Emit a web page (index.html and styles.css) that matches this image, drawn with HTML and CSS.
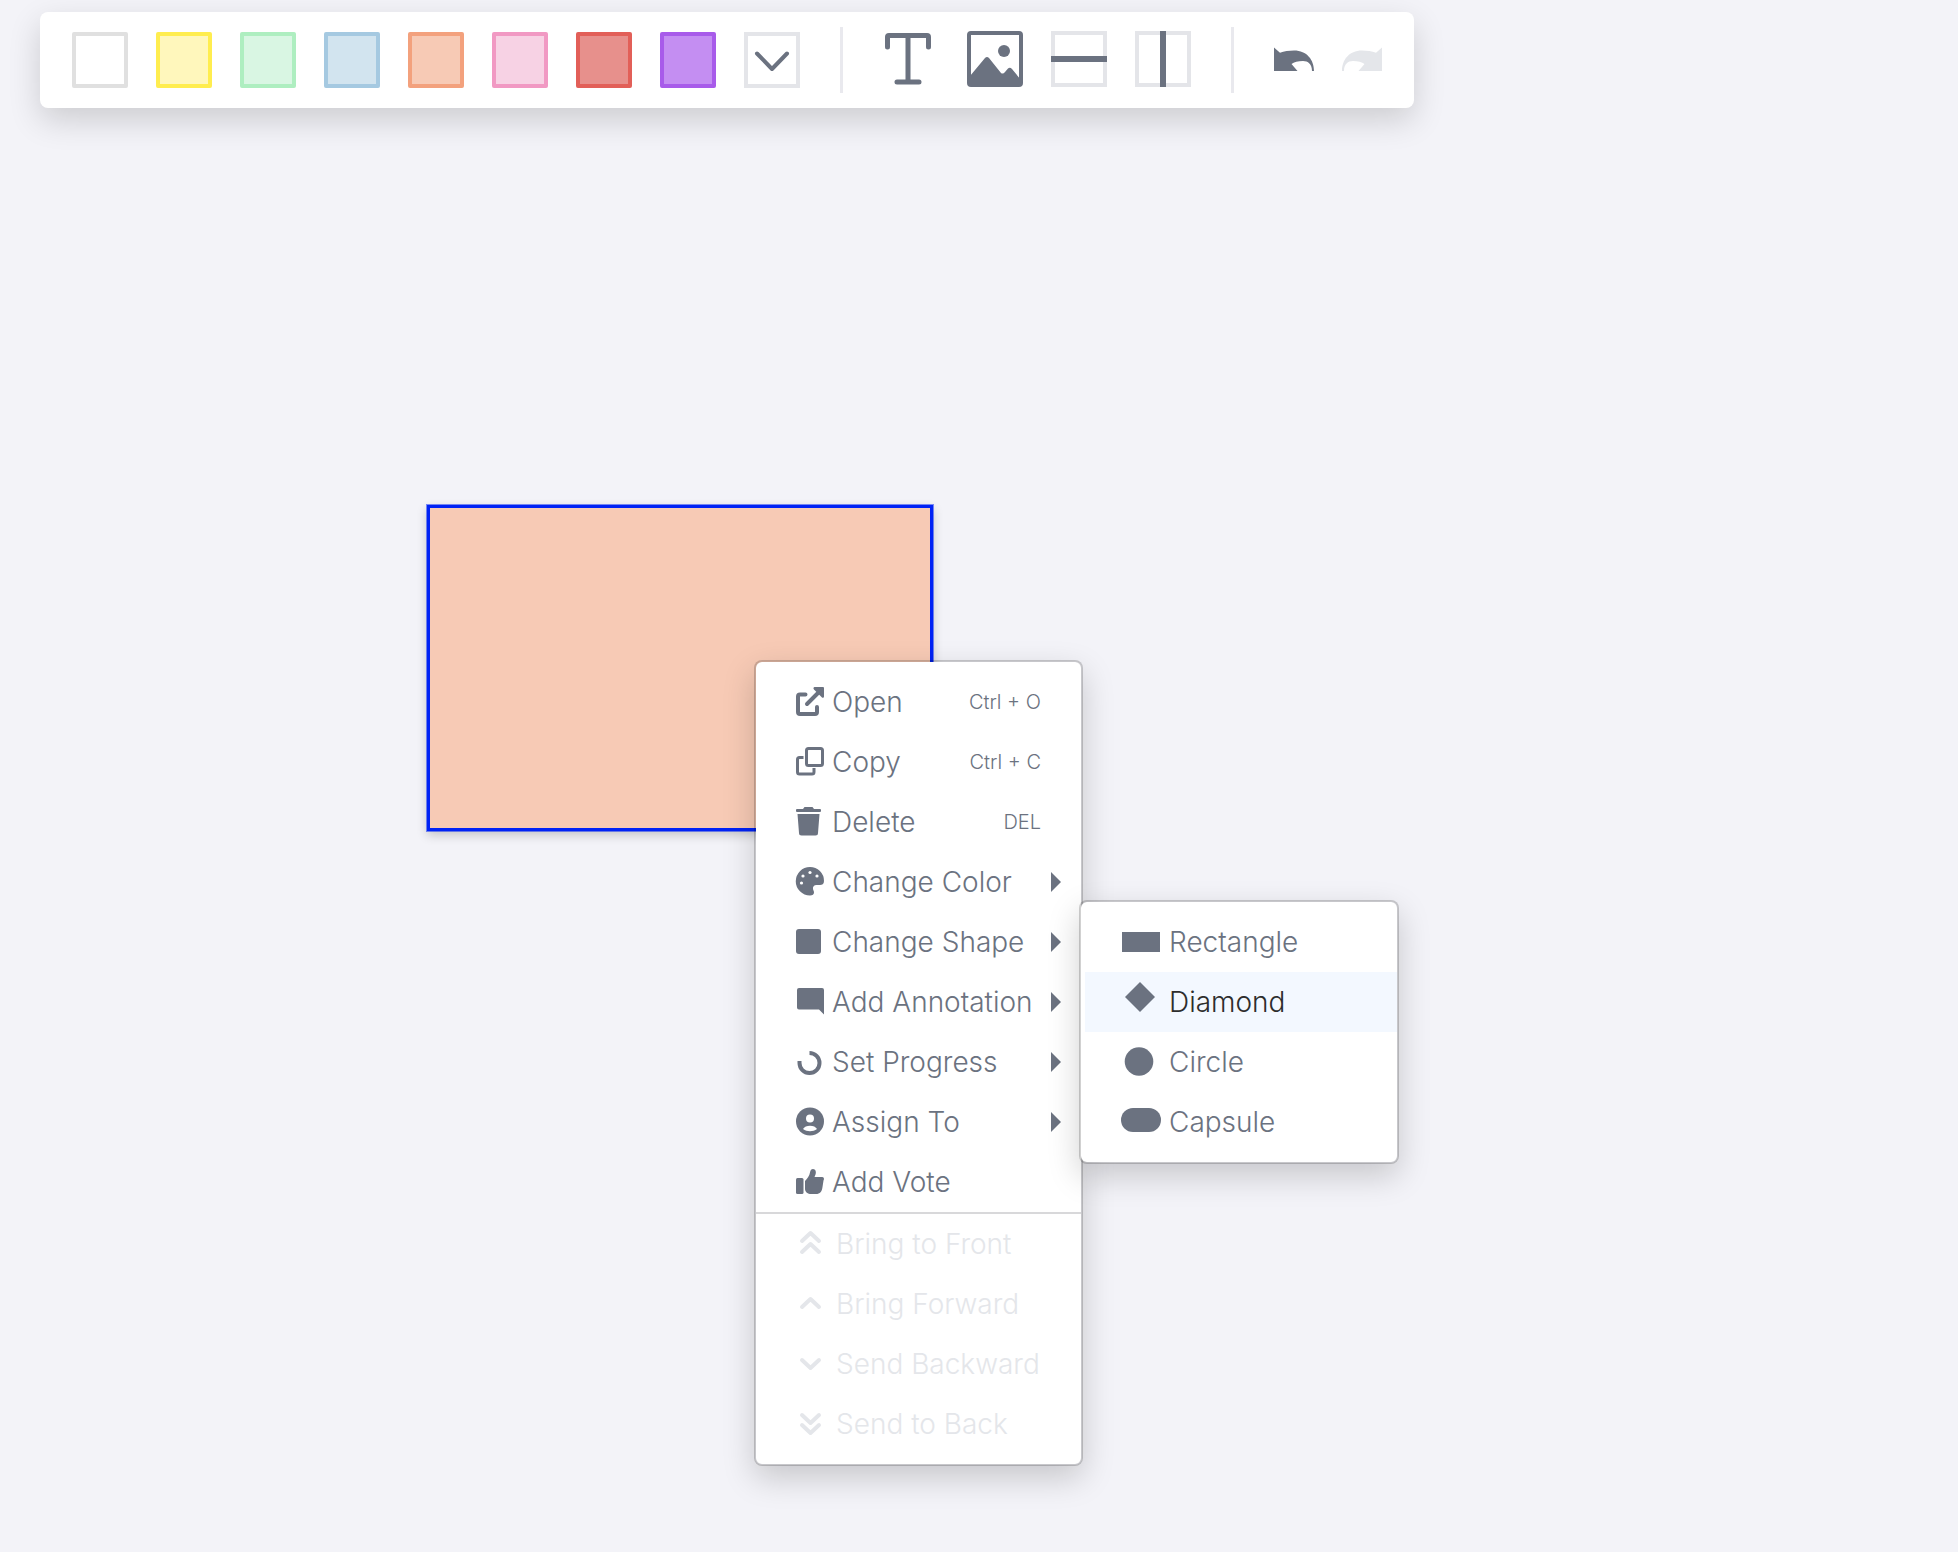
FILE: index.html
```html
<!DOCTYPE html>
<html lang="en">
<head>
    <meta charset="utf-8">
    <title>Canvas Editor</title>
    <link rel="stylesheet" href="styles.css">
</head>
<body>
    <header class="toolbar">
        <div class="tool-group">
            <button type="button" class="swatch white" aria-label="White"></button>
            <button type="button" class="swatch yellow" aria-label="Yellow"></button>
            <button type="button" class="swatch green" aria-label="Green"></button>
            <button type="button" class="swatch blue" aria-label="Blue"></button>
            <button type="button" class="swatch orange" aria-label="Orange"></button>
            <button type="button" class="swatch pink" aria-label="Pink"></button>
            <button type="button" class="swatch red" aria-label="Red"></button>
            <button type="button" class="swatch purple" aria-label="Purple"></button>
            <button type="button" class="swatch more" aria-label="More colors">
                <svg width="48" height="48" viewBox="0 0 48 48"><path d="M9 17.500L24 33L39 17.500" fill="none" stroke="currentColor" stroke-width="4" stroke-linecap="round" stroke-linejoin="round"/></svg>
            </button>
        </div>
        <div class="divider"></div>
        <div class="tool-group tools">
            <button type="button" class="tool" aria-label="Text">
                <svg width="56" height="56" viewBox="0 0 56 56"><path d="M4.500 16V6a1.500 1.500 0 0 1 1.500-1.500H44a1.500 1.500 0 0 1 1.500 1.500V16M25 5V51M14 51H36" fill="none" stroke="currentColor" stroke-width="5" stroke-linecap="round"/></svg>
            </button>
            <button type="button" class="tool" aria-label="Image">
                <svg width="56" height="56" viewBox="0 0 56 56">
                    <rect x="2" y="2" width="52" height="52" rx="2" fill="none" stroke="currentColor" stroke-width="4"/>
                    <circle cx="37" cy="20" r="6" fill="currentColor"/>
                    <path d="M3 45L18 27Q20 25 22 27L34 42Q36 43.500 38 41L41 37.500Q43 36 45 38L54 49V54H3Z" fill="currentColor"/>
                </svg>
            </button>
            <button type="button" class="tool" aria-label="Horizontal line">
                <svg width="56" height="56" viewBox="0 0 56 56"><rect class="frame" x="2" y="2" width="52" height="52"/><rect y="25" width="56" height="6" fill="currentColor"/></svg>
            </button>
            <button type="button" class="tool" aria-label="Vertical line">
                <svg width="56" height="56" viewBox="0 0 56 56"><rect class="frame" x="2" y="2" width="52" height="52"/><rect x="25" width="6" height="56" fill="currentColor"/></svg>
            </button>
        </div>
        <div class="divider"></div>
        <div class="tool-group tools">
            <button type="button" class="tool" aria-label="Undo">
                <svg width="40" height="24" viewBox="0 0 40 24"><path d="M0 0.500L6 5.800C10 4.200 15 3.500 20 3.500C33 3.500 40 13 40 24H38C38 17 34 14 29 14C24 14 20 15 17.500 17L23.500 24H0Z" fill="currentColor"/></svg>
            </button>
            <button type="button" class="tool" aria-label="Redo" disabled>
                <svg width="40" height="24" viewBox="0 0 40 24"><path d="M40 0.500L34 5.800C30 4.200 25 3.500 20 3.500C7 3.500 0 13 0 24H2C2 17 6 14 11 14C16 14 20 15 22.500 17L16.500 24H40Z" fill="currentColor"/></svg>
            </button>
        </div>
    </header>

    <main>
        <div class="note"></div>

        <ul class="menu context-menu">
            <li><button type="button">
                <svg width="28" height="30" viewBox="0 0 28 30"><path d="M9.500 7.500H4a2 2 0 0 0-2 2V25a2 2 0 0 0 2 2H19a2 2 0 0 0 2-2V20M11 17L23 5" fill="none" stroke="currentColor" stroke-width="4" stroke-linecap="round"/><path d="M18.500 0H27a1 1 0 0 1 1 1V9.500C28 11 26.500 11 26 10.500L18 2.500C17 1.500 17.500 0 18.500 0Z" fill="currentColor"/></svg>
                <span>Open</span><kbd>Ctrl + O</kbd>
            </button></li>
            <li><button type="button">
                <svg width="28" height="30" viewBox="0 0 28 30"><g fill="none" stroke="currentColor" stroke-width="3"><rect x="10.500" y="1.500" width="16" height="17" rx="2"/><path d="M7.500 10.500H3.500a2 2 0 0 0-2 2V25a2 2 0 0 0 2 2H16a2 2 0 0 0 2-2V21"/></g></svg>
                <span>Copy</span><kbd>Ctrl + C</kbd>
            </button></li>
            <li><button type="button">
                <svg width="28" height="30" viewBox="0 0 28 30"><path d="M1 2H7L8.500 0H16.500L18 2H24a1 1 0 0 1 1 1V4a1 1 0 0 1-1 1H1a1 1 0 0 1-1-1V3a1 1 0 0 1 1-1ZM1.500 7H23.500L22 26a2.500 2.500 0 0 1-2.500 2.500H5.500A2.500 2.500 0 0 1 3 26Z" fill="currentColor"/></svg>
                <span>Delete</span><kbd>DEL</kbd>
            </button></li>
            <li><button type="button" class="has-sub">
                <svg width="28" height="30" viewBox="0 0 28 30"><path d="M14 0A14 14 0 0 1 28 14C28 17 26 18 24 18H20.500C18 18 16.500 20 17 22C17.300 23.500 18 24 18 25.500C18 27.500 16.500 28.500 14 28.500A14 14 0 0 1 14 0Z" fill="currentColor"/><g fill="#fff"><circle cx="5.500" cy="16" r="1.600"/><circle cx="7" cy="9" r="1.600"/><circle cx="14" cy="5.500" r="1.600"/><circle cx="21" cy="9" r="1.600"/></g></svg>
                <span>Change Color</span>
            </button></li>
            <li><button type="button" class="has-sub">
                <svg width="28" height="30" viewBox="0 0 28 30"><rect y="2" width="25" height="25" rx="3" fill="currentColor"/></svg>
                <span>Change Shape</span>
            </button>
                <ul class="menu submenu">
                    <li><button type="button">
                        <svg width="40" height="40" viewBox="0 0 40 40"><rect x="1" y="10" width="38" height="20" fill="currentColor"/></svg>
                        <span>Rectangle</span>
                    </button></li>
                    <li><button type="button" class="active">
                        <svg width="40" height="40" viewBox="0 0 40 40"><path d="M19 0L34 15L19 30L4 15Z"/></svg>
                        <span>Diamond</span>
                    </button></li>
                    <li><button type="button">
                        <svg width="40" height="40" viewBox="0 0 40 40"><circle cx="18" cy="19.500" r="14.300" fill="currentColor"/></svg>
                        <span>Circle</span>
                    </button></li>
                    <li><button type="button">
                        <svg width="40" height="40" viewBox="0 0 40 40"><rect y="6" width="40" height="24" rx="12" fill="currentColor"/></svg>
                        <span>Capsule</span>
                    </button></li>
                </ul>
            </li>
            <li><button type="button" class="has-sub">
                <svg width="28" height="30" viewBox="0 0 28 30"><path d="M3 1H26a2 2 0 0 1 2 2V27.500L23 22.500H3a2 2 0 0 1-2-2V3a2 2 0 0 1 2-2Z" fill="currentColor"/></svg>
                <span>Add Annotation</span>
            </button></li>
            <li><button type="button" class="has-sub">
                <svg width="28" height="30" viewBox="0 0 28 30"><path d="M13.500 6A10 10 0 1 1 3.500 16V14" fill="none" stroke="currentColor" stroke-width="4"/></svg>
                <span>Set Progress</span>
            </button></li>
            <li><button type="button" class="has-sub">
                <svg width="28" height="30" viewBox="0 0 28 30"><circle cx="14" cy="14.500" r="14" fill="currentColor"/><circle cx="14" cy="11.500" r="4" fill="#fff"/><path d="M7 22C9 17.500 19 17.500 21 22C17 25 11 25 7 22Z" fill="#fff"/></svg>
                <span>Assign To</span>
            </button></li>
            <li><button type="button">
                <svg width="28" height="30" viewBox="0 0 28 30"><rect y="11" width="7.500" height="16" rx="1.500" fill="currentColor"/><path d="M9 14C11 12 13.500 9 14 5.500C14.300 3 15.500 2 17 2C19.500 2 20.500 5 19.500 7.500L18.500 10H26C28 10 28.500 12 27.500 13.500L26.500 20C26 24.500 24 27 20 27H15C12 27 9 25 9 22Z" fill="currentColor"/></svg>
                <span>Add Vote</span>
            </button></li>
            <li class="arrange"><button type="button" disabled>
                <svg width="32" height="30" viewBox="0 0 32 30"><path d="M6 12L14.500 4L23 12M6 23L14.500 15L23 23"/></svg>
                <span>Bring to Front</span>
            </button></li>
            <li><button type="button" disabled>
                <svg width="32" height="30" viewBox="0 0 32 30"><path d="M6 18L14.500 10L23 18"/></svg>
                <span>Bring Forward</span>
            </button></li>
            <li><button type="button" disabled>
                <svg width="32" height="30" viewBox="0 0 32 30"><path d="M6 11L14.500 19L23 11"/></svg>
                <span>Send Backward</span>
            </button></li>
            <li><button type="button" disabled>
                <svg width="32" height="30" viewBox="0 0 32 30"><path d="M6 6L14.500 14L23 6M6 16L14.500 24L23 16"/></svg>
                <span>Send to Back</span>
            </button></li>
        </ul>
    </main>
</body>
</html>
```
FILE: styles.css
```css
* {
    box-sizing: border-box;
}
body {
    margin: 0;
    padding: 12px 40px;
    min-height: 100vh;
    background: #f3f3f8;
    color: #6b7280;
    font-family: Inter, "Liberation Sans", sans-serif;
    font-weight: 300;
}
button {
    margin: 0;
    padding: 0;
    border: none;
    background: none;
    color: inherit;
    font: inherit;
    cursor: pointer;
}
button:disabled {
    color: #e4e6ea;
    cursor: default;
}
svg {
    display: block;
    flex: none;
    overflow: visible;
}

/* toolbar */
.toolbar {
    display: flex;
    align-items: center;
    gap: 40px;
    width: fit-content;
    height: 96px;
    padding: 0 32px;
    background: #fff;
    border-radius: 8px;
    box-shadow: 0 12px 32px rgba(0,0,0,0.16);
}
.tool-group {
    display: flex;
    align-items: center;
    gap: 28px;
}
.tools {
    padding-bottom: 2px;
}
.divider {
    width: 3px;
    height: 66px;
    background: #e9e9ee;
}
.swatch {
    width: 56px;
    height: 56px;
    border: 4px solid;
    border-radius: 2px;
}
.white { background: #fff; border-color: #e0e0e0; }
.yellow { background: #fff7bc; border-color: #ffed4f; }
.green { background: #d9f6e3; border-color: #aeeec0; }
.blue { background: #d2e4ef; border-color: #a5c9e1; }
.orange { background: #f7cab5; border-color: #f3a17d; }
.pink { background: #f7d2e4; border-color: #f199c3; }
.red { background: #e7908c; border-color: #e25f58; }
.purple { background: #c48ef2; border-color: #a85bea; }
.more {
    border-color: #e4e5e9;
    border-radius: 0;
    color: #6b7280;
}
.frame {
    fill: none;
    stroke: #e4e5e9;
    stroke-width: 4px;
}

/* canvas */
.note {
    position: absolute;
    left: 427px;
    top: 505px;
    width: 506px;
    height: 326px;
    background: #f7cab5;
    border: 3px solid #0022f5;
    box-shadow: 0 0 0 1px rgba(0,34,245,0.5), 0 4px 10px rgba(0,0,0,0.2);
}

/* menus */
.menu {
    position: absolute;
    margin: 0;
    padding: 10px 0;
    list-style: none;
    background: #fff;
    background-clip: padding-box;
    border: 2px solid rgba(0,0,0,0.18);
    border-radius: 8px;
    box-shadow: 0 12px 32px rgba(0,0,0,0.18);
}
.menu li {
    position: relative;
}
.menu button {
    display: flex;
    align-items: center;
    gap: 8px;
    width: 100%;
    height: 60px;
    padding: 0 40px;
    font-size: 28px;
    white-space: nowrap;
}
.menu kbd {
    margin-left: auto;
    font-family: inherit;
    font-size: 20px;
}
.menu .has-sub {
    padding-right: 20px;
}
.has-sub::after {
    content: "";
    margin-left: auto;
    border: 10px solid transparent;
    border-left-color: #6b7280;
    border-right: 0;
}
.menu .arrange {
    border-top: 2px solid #d8d8da;
}
.menu button:disabled path {
    fill: none;
    stroke: currentColor;
    stroke-width: 4px;
    stroke-linecap: round;
    stroke-linejoin: round;
}
.context-menu {
    left: 754px;
    top: 660px;
    width: 329px;
}
/* keep the flyout above the rows that follow it */
.submenu {
    z-index: 1;
    left: 100%;
    top: -12px;
    width: 320px;
    margin-left: -2px;
    padding-left: 4px;
}
.submenu button {
    padding: 0 36px;
}
.submenu .active {
    background: #f3f8ff;
    color: #2d2d2d;
}
.active path {
    fill: #6b7280;
}
```
